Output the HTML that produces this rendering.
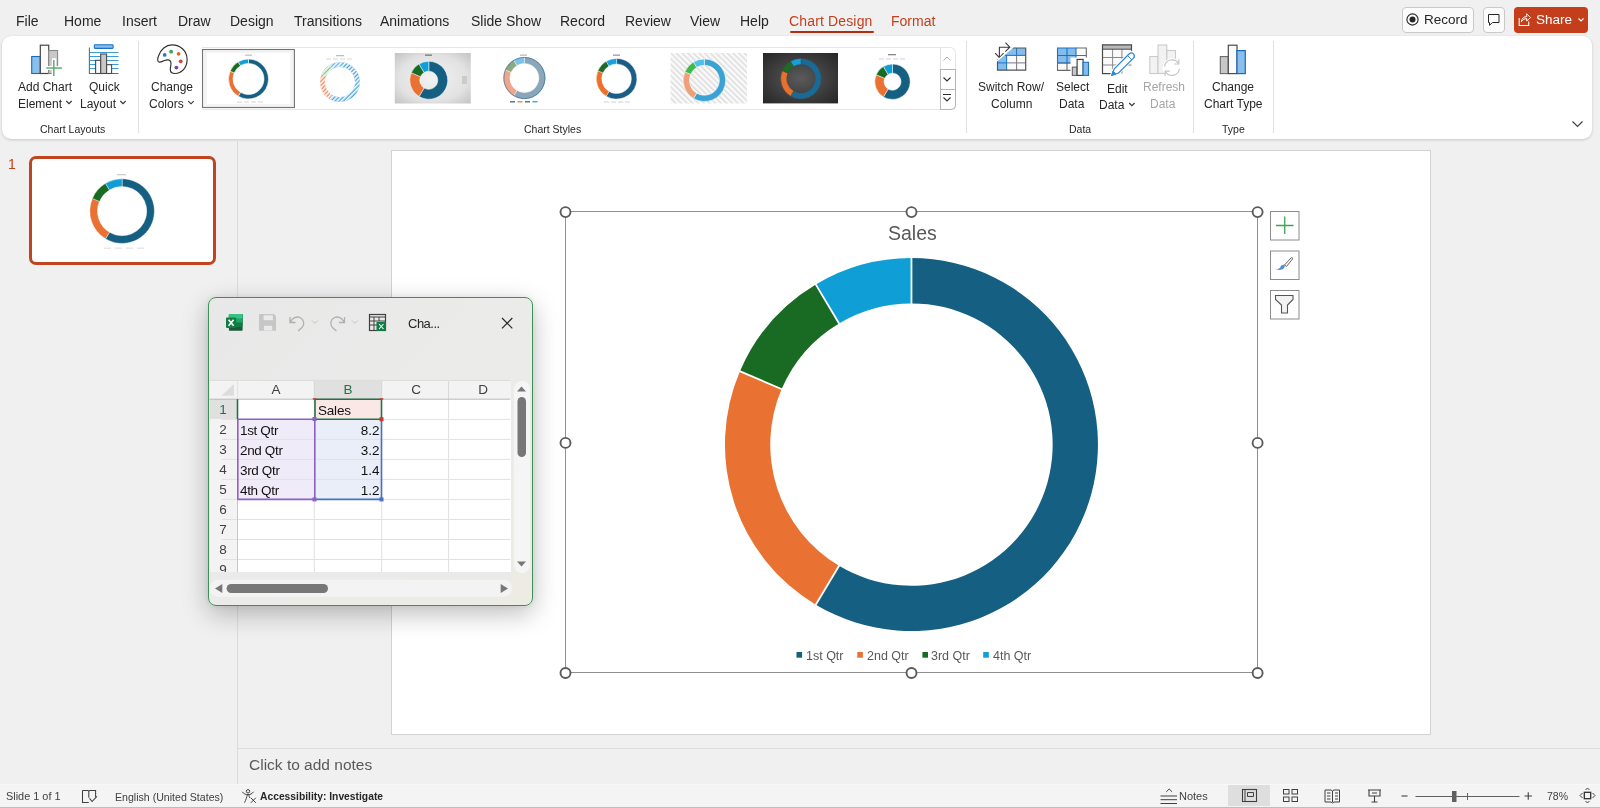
<!DOCTYPE html><html><head><meta charset="utf-8"><style>
*{margin:0;padding:0;box-sizing:border-box}
html,body{width:1600px;height:808px;overflow:hidden;background:#f0f0f0;font-family:"Liberation Sans",sans-serif;-webkit-font-smoothing:antialiased}
.t{position:absolute;white-space:nowrap;line-height:1;will-change:transform}
.a{position:absolute}
svg{position:absolute;overflow:visible}
</style></head><body><div class="t" style="left:16.3px;top:14.35px;font-size:14px;color:#262626;font-weight:normal;">File</div><div class="t" style="left:63.9px;top:14.35px;font-size:14px;color:#262626;font-weight:normal;">Home</div><div class="t" style="left:122px;top:14.35px;font-size:14px;color:#262626;font-weight:normal;">Insert</div><div class="t" style="left:177.8px;top:14.35px;font-size:14px;color:#262626;font-weight:normal;">Draw</div><div class="t" style="left:230px;top:14.35px;font-size:14px;color:#262626;font-weight:normal;">Design</div><div class="t" style="left:293.5px;top:14.35px;font-size:14px;color:#262626;font-weight:normal;">Transitions</div><div class="t" style="left:380px;top:14.35px;font-size:14px;color:#262626;font-weight:normal;">Animations</div><div class="t" style="left:470.9px;top:14.35px;font-size:14px;color:#262626;font-weight:normal;">Slide Show</div><div class="t" style="left:559.6px;top:14.35px;font-size:14px;color:#262626;font-weight:normal;">Record</div><div class="t" style="left:624.6px;top:14.35px;font-size:14px;color:#262626;font-weight:normal;">Review</div><div class="t" style="left:690px;top:14.35px;font-size:14px;color:#262626;font-weight:normal;">View</div><div class="t" style="left:739.5px;top:14.35px;font-size:14px;color:#262626;font-weight:normal;">Help</div><div class="t" style="left:788.9px;top:14.35px;font-size:14px;color:#c43e1c;font-weight:normal;letter-spacing:0.15px">Chart Design</div><div class="t" style="left:891.2px;top:14.35px;font-size:14px;color:#c43e1c;font-weight:normal;">Format</div><div class="a" style="left:790px;top:30.8px;width:83.5px;height:2.3px;background:#b42c0e;border-radius:1.2px"></div><div class="a" style="left:1401.5px;top:7px;width:72.3px;height:25.5px;border:1px solid #c9c9c9;border-radius:4px;background:#fbfbfb"></div><svg style="left:0;top:0" width="1600" height="40"><circle cx="1412.5" cy="19.5" r="5.6" fill="none" stroke="#262626" stroke-width="1.1"/><circle cx="1412.5" cy="19.5" r="3" fill="#262626"/></svg><div class="t" style="left:1424px;top:13.47px;font-size:13.5px;color:#262626;font-weight:normal;">Record</div><div class="a" style="left:1483px;top:7px;width:21.5px;height:25.5px;border:1px solid #c9c9c9;border-radius:4px;background:#fbfbfb"></div><svg style="left:0;top:0" width="1600" height="40"><path d="M1488.5,14.5 h10.5 v8 h-6.5 l-3,2.8 v-2.8 h-1 z" fill="none" stroke="#262626" stroke-width="1"/></svg><div class="a" style="left:1513.75px;top:7px;width:74.5px;height:25.5px;border-radius:4px;background:#c43e1c"></div><svg style="left:0;top:0" width="1600" height="40"><path d="M1519.2,18.1 V25.5 H1528.7 V21.4" fill="none" stroke="#fff" stroke-width="1.1"/><path d="M1521.4,21.8 C1521.8,18.2 1524,16.6 1526.7,16.6 V13.8 L1530.6,17.6 L1526.7,21 V18.6 C1524.5,18.6 1522.6,19.6 1521.4,21.8 Z" fill="none" stroke="#fff" stroke-width="1"/><path d="M1578.5,18.5 l2.5,2.5 l2.5,-2.5" fill="none" stroke="#fff" stroke-width="1.1"/></svg><div class="t" style="left:1535.6px;top:13.47px;font-size:13.5px;color:#ffffff;font-weight:normal;">Share</div><div class="a" style="left:2.3px;top:36px;width:1589.7px;height:103px;background:#fff;border-radius:9px;box-shadow:0 1px 3px rgba(0,0,0,0.16),0 0 1px rgba(0,0,0,0.1)"></div><div class="a" style="left:138.0px;top:41px;width:1px;height:92px;background:#e0e0e0"></div><div class="a" style="left:966.0px;top:41px;width:1px;height:92px;background:#e0e0e0"></div><div class="a" style="left:1193.0px;top:41px;width:1px;height:92px;background:#e0e0e0"></div><div class="a" style="left:1272.5px;top:41px;width:1px;height:92px;background:#e0e0e0"></div><div class="t" style="left:39.75px;top:124.01px;font-size:10.5px;color:#262626;font-weight:normal;">Chart Layouts</div><div class="t" style="left:523.5px;top:124.01px;font-size:10.5px;color:#262626;font-weight:normal;">Chart Styles</div><div class="t" style="left:1068.7px;top:124.01px;font-size:10.5px;color:#262626;font-weight:normal;">Data</div><div class="t" style="left:1222px;top:124.01px;font-size:10.5px;color:#262626;font-weight:normal;">Type</div><svg style="left:0;top:0" width="1600" height="140"><path d="M1572.5,121.5 l5,5 l5,-5" fill="none" stroke="#404040" stroke-width="1.2"/></svg><div class="t" style="left:17.5px;top:80.84px;font-size:12px;color:#262626;font-weight:normal;">Add Chart</div><div class="t" style="left:17.5px;top:97.84px;font-size:12px;color:#262626;font-weight:normal;">Element</div><div class="t" style="left:88.75px;top:80.84px;font-size:12px;color:#262626;font-weight:normal;">Quick</div><div class="t" style="left:80px;top:97.84px;font-size:12px;color:#262626;font-weight:normal;">Layout</div><div class="t" style="left:151px;top:80.84px;font-size:12px;color:#262626;font-weight:normal;">Change</div><div class="t" style="left:148.75px;top:97.84px;font-size:12px;color:#262626;font-weight:normal;">Colors</div><div class="t" style="left:977.7px;top:80.54px;font-size:12px;color:#262626;font-weight:normal;">Switch Row/</div><div class="t" style="left:990.7px;top:97.54px;font-size:12px;color:#262626;font-weight:normal;">Column</div><div class="t" style="left:1055.5px;top:80.54px;font-size:12px;color:#262626;font-weight:normal;">Select</div><div class="t" style="left:1059px;top:97.54px;font-size:12px;color:#262626;font-weight:normal;">Data</div><div class="t" style="left:1106.6px;top:82.54px;font-size:12px;color:#262626;font-weight:normal;">Edit</div><div class="t" style="left:1098.7px;top:99.04px;font-size:12px;color:#262626;font-weight:normal;">Data</div><div class="t" style="left:1142.6px;top:80.54px;font-size:12px;color:#a6a6a6;font-weight:normal;">Refresh</div><div class="t" style="left:1150px;top:97.54px;font-size:12px;color:#a6a6a6;font-weight:normal;">Data</div><div class="t" style="left:1212px;top:80.84px;font-size:12px;color:#262626;font-weight:normal;">Change</div><div class="t" style="left:1203.75px;top:97.84px;font-size:12px;color:#262626;font-weight:normal;">Chart Type</div><svg style="left:0;top:0" width="1600" height="140"><path d="M66.3,101 l2.7,2.6 l2.7,-2.6" fill="none" stroke="#333" stroke-width="1.15"/><path d="M120.3,101 l2.7,2.6 l2.7,-2.6" fill="none" stroke="#333" stroke-width="1.15"/><path d="M188.3,101.2 l2.7,2.6 l2.7,-2.6" fill="none" stroke="#333" stroke-width="1.15"/><path d="M1129.2,103 l2.7,2.6 l2.7,-2.6" fill="none" stroke="#333" stroke-width="1.15"/>
<!-- Add chart element -->
<rect x="31.7" y="56.5" width="8.6" height="17" fill="#89bfec" stroke="#1769bf" stroke-width="1.1"/>
<rect x="40.3" y="45.2" width="8.4" height="28.3" fill="#fafafa" stroke="#454545" stroke-width="1.2"/>
<rect x="48.7" y="50.5" width="8.9" height="23" fill="#c8c8c8" stroke="#8a8a8a" stroke-width="1.1"/>
<path d="M46.3,68 H62 M53.8,60 V76" stroke="#fff" stroke-width="4"/>
<rect x="52" y="58.3" width="4.3" height="8" fill="#fff"/><rect x="52" y="66" width="8" height="9" fill="#fff"/>
<path d="M46.3,68 H62 M53.8,60 V76" stroke="#5cb176" stroke-width="1.5"/>
<!-- Quick layout -->
<rect x="94.3" y="44.8" width="18.8" height="3.6" rx="0.8" fill="#84bdeb" stroke="#1a73c8" stroke-width="1.1"/>
<path d="M89.8,52.5 h28.7 M89.8,56.5 h28.7 M89.8,60.5 h28.7 M89.8,64.5 h28.7 M89.8,68.5 h28.7" stroke="#3d9ad8" stroke-width="1"/>
<path d="M89.4,47.4 V73.5 H118.5" fill="none" stroke="#6a6a6a" stroke-width="1.1"/>
<rect x="95.6" y="60.3" width="5.1" height="13.2" fill="#fafafa" stroke="#4a4a4a" stroke-width="1.1"/>
<rect x="100.7" y="54" width="5.9" height="19.5" fill="#c8c8c8" stroke="#4a4a4a" stroke-width="1.1"/>
<rect x="106.6" y="64.7" width="5" height="8.8" fill="#fafafa" stroke="#4a4a4a" stroke-width="1.1"/>
<!-- palette -->
<path d="M172,44.8 C180.5,44.8 187.1,51 187.1,59.5 C187.1,68 181.5,73.5 175,73.5 C172,73.5 170.3,72 170.3,69.5 C170.3,66.5 171.5,64.5 170.8,62 C170,59.5 167,59.5 164.5,60.5 C162,61.5 160.5,62.5 158.8,62 C157.3,61.5 157.5,58.5 158.5,56 C160.5,49.5 166,44.8 172,44.8 Z" fill="#fff" stroke="#303030" stroke-width="1.15"/>
<circle cx="164.7" cy="54.9" r="1.9" fill="#2b79c9"/>
<circle cx="171.1" cy="51.7" r="1.9" fill="#3aa35a"/>
<circle cx="178.6" cy="53.8" r="1.9" fill="#e06c1b"/>
<circle cx="180.7" cy="61.3" r="1.9" fill="#e03a3a"/>
<circle cx="176.4" cy="67.6" r="1.9" fill="#8a3ab9"/>
<!-- switch row/col -->
<path d="M997.5,59.5 L1011.5,48 H1025.7 V70.2 H997.5 Z" fill="#fafafa"/>
<path d="M997.5,59.5 L1011.5,48 H1025.7 V55.4 H1006.6 V70.2 H997.5 Z" fill="#84bdeb"/>
<path d="M1006.6,62.9 H1025.7 M1016.6,55.4 V70.2" stroke="#7a7a7a" stroke-width="1"/>
<path d="M1005,55.4 H1025.7 M1006.6,55.4 V70.2 M997.5,62.9 H1006.6 M1016.6,48 V55.4" stroke="#1a73c8" stroke-width="1"/>
<path d="M997.5,59 V70.2 H1025.7 V48 H1011.5" fill="none" stroke="#555" stroke-width="1.2"/>
<path d="M999.4,57.6 V47.2 H1009.8 M1005.5,42.7 L1009.8,47.2 L1005.3,51.6 M995.2,53.1 L999.4,57.6 L1003.6,53.1" fill="none" stroke="#3a3a3a" stroke-width="1.1"/>
<path d="M995.5,62 L1013,47" stroke="#fff" stroke-width="1.6"/>
<!-- select data -->
<rect x="1057.5" y="48" width="28.8" height="22.4" fill="#fafafa"/>
<rect x="1057.5" y="48" width="18.5" height="15" fill="#84bdeb"/>
<path d="M1076,48 H1086.3 V70.4 H1057.5 V63 M1076,55.5 H1086.3 M1057.5,63 H1076 M1067,63 V70.4" fill="none" stroke="#6a6a6a" stroke-width="1.1"/>
<path d="M1057.5,63 V48 H1076 V63 H1057.5 M1057.5,55.5 H1076 M1067,48 V63" fill="none" stroke="#1a73c8" stroke-width="1.1"/>
<rect x="1070.5" y="57.5" width="19.5" height="19" fill="#fff"/>
<rect x="1072.3" y="67.1" width="4.8" height="8.3" fill="#c8c8c8" stroke="#5a5a5a" stroke-width="1"/>
<rect x="1077.1" y="59.4" width="6" height="16" fill="#fafafa" stroke="#3a3a3a" stroke-width="1.1"/>
<rect x="1083.1" y="62.3" width="5.4" height="13.1" fill="#84bdeb" stroke="#1a73c8" stroke-width="1.1"/>
<!-- edit data -->
<rect x="1102.5" y="44.8" width="29" height="28.9" fill="#fafafa"/>
<rect x="1102.5" y="44.8" width="29" height="4.4" fill="#b8b8b8"/>
<path d="M1102.5,57.5 H1131.5 M1102.5,65 H1131.5 M1112.6,49.2 V73.7 M1121.9,49.2 V73.7" stroke="#8a8a8a" stroke-width="1"/>
<path d="M1131.5,52 V44.8 H1102.5 V73.7 H1113" fill="none" stroke="#4a4a4a" stroke-width="1.2"/>
<path d="M1102.5,49.2 H1131.5" stroke="#4a4a4a" stroke-width="1"/>
<path d="M1111,76 L1114,68.5 L1129,53.5 C1130.5,52 1132.5,52 1133.8,53.3 C1135.1,54.6 1135.1,56.6 1133.6,58.1 L1118.6,73 Z" fill="#fff" stroke="#fff" stroke-width="2.5"/>
<path d="M1111.8,75.3 L1114.3,68.8 L1129,54 C1130.3,52.7 1132.2,52.7 1133.4,53.9 C1134.6,55.1 1134.6,57 1133.3,58.3 L1118.5,73 Z" fill="#fff" stroke="#2b88d8" stroke-width="1.2"/>
<path d="M1111.8,75.3 L1113,71 L1116,74 Z" fill="#2b88d8" stroke="#2b88d8" stroke-width="1"/>
<path d="M1127.5,55.5 L1132,60" stroke="#2b88d8" stroke-width="1"/>
<!-- refresh data (disabled) -->
<rect x="1149.8" y="56.5" width="8.2" height="17" fill="#f2f2f2" stroke="#cacaca" stroke-width="1.1"/>
<rect x="1158" y="45" width="8.8" height="28.5" fill="#f2f2f2" stroke="#cacaca" stroke-width="1.1"/>
<rect x="1166.8" y="50.5" width="8.7" height="23" fill="#f2f2f2" stroke="#cacaca" stroke-width="1.1"/>
<circle cx="1172" cy="67.6" r="9.5" fill="#fff"/>
<path d="M1164.6,66.5 A7.5,7.5 0 0 1 1178.5,63.5 M1179.4,68.7 A7.5,7.5 0 0 1 1165.5,71.7" fill="none" stroke="#c4c4c4" stroke-width="1.2"/>
<path d="M1178.8,59.5 V64 H1174.3 M1165.2,75.7 V71.2 H1169.7" fill="none" stroke="#c4c4c4" stroke-width="1.2"/>
<!-- change chart type -->
<rect x="1220.3" y="56.6" width="8" height="17" fill="#c8c8c8" stroke="#6a6a6a" stroke-width="1.1"/>
<rect x="1228.3" y="45.2" width="8.7" height="28.4" fill="#fafafa" stroke="#4a4a4a" stroke-width="1.2"/>
<rect x="1237" y="50.6" width="8.3" height="23" fill="#89bfec" stroke="#1769bf" stroke-width="1.2"/>
</svg><div class="a" style="left:202px;top:47px;width:754px;height:62.5px;border:1px solid #e6e6e6;border-left:none;border-radius:0 6px 6px 0;background:#fff"></div><div class="a" style="left:939.5px;top:47.5px;width:1px;height:62px;background:#e1e1e1"></div><div class="a" style="left:939.5px;top:69px;width:16.5px;height:1px;background:#b5b5b5"></div><div class="a" style="left:939.5px;top:89px;width:16.5px;height:1px;background:#b5b5b5"></div><div class="a" style="left:940px;top:69px;width:16px;height:40.5px;border:1px solid #b5b5b5;border-radius:0 0 5px 0;border-top:none"></div><svg style="left:0;top:0" width="1600" height="140"><path d="M943.5,60.5 l3.5,-3.5 l3.5,3.5" fill="none" stroke="#b0b0b0" stroke-width="1"/><path d="M943.5,77.5 l3.5,3.5 l3.5,-3.5" fill="none" stroke="#303030" stroke-width="1.1"/><path d="M943,94.5 h8 M943.5,97.5 l3.5,3.5 l3.5,-3.5" fill="none" stroke="#303030" stroke-width="1.1"/><rect x="202.5" y="49.5" width="91.9" height="58" fill="#f4f4f4" stroke="#747474" stroke-width="1.1"/><rect x="207" y="53" width="83" height="51" fill="#fff"/><path d="M248.50,59.00 A20,20 0 1 1 238.24,96.17 L240.55,92.31 A15.5,15.5 0 1 0 248.50,63.50 Z" fill="#156082" stroke="#fff" stroke-width="0.6" /><path d="M238.24,96.17 A20,20 0 0 1 230.11,71.14 L234.25,72.91 A15.5,15.5 0 0 0 240.55,92.31 Z" fill="#e97132" stroke="#fff" stroke-width="0.6" /><path d="M230.11,71.14 A20,20 0 0 1 238.24,61.83 L240.55,65.69 A15.5,15.5 0 0 0 234.25,72.91 Z" fill="#196b24" stroke="#fff" stroke-width="0.6" /><path d="M238.24,61.83 A20,20 0 0 1 248.50,59.00 L248.50,63.50 A15.5,15.5 0 0 0 240.55,65.69 Z" fill="#0f9ed5" stroke="#fff" stroke-width="0.6" /><rect x="245" y="54.5" width="7" height="1.3" fill="#c4c4c4"/><rect x="237" y="101.5" width="5" height="1" fill="#d4d4d4"/><rect x="244" y="101.5" width="5" height="1" fill="#d4d4d4"/><rect x="251" y="101.5" width="5" height="1" fill="#d4d4d4"/><rect x="258" y="101.5" width="5" height="1" fill="#d4d4d4"/><defs><pattern id="h1" width="3" height="3" patternUnits="userSpaceOnUse" patternTransform="rotate(45)"><rect width="1.6" height="3" fill="#fff"/></pattern><pattern id="h2" width="4" height="4" patternUnits="userSpaceOnUse" patternTransform="rotate(-45)"><rect width="4" height="4" fill="#fafafa"/><rect width="1.5" height="4" fill="#dcdcdc"/></pattern><radialGradient id="g3" cx="0.5" cy="0.5" r="0.75"><stop offset="0" stop-color="#f2f2f2"/><stop offset="0.6" stop-color="#e2e2e2"/><stop offset="1" stop-color="#bdbdbd"/></radialGradient><radialGradient id="g7" cx="0.5" cy="0.5" r="0.7"><stop offset="0" stop-color="#5a5a5a"/><stop offset="1" stop-color="#262626"/></radialGradient></defs><path d="M340.00,62.00 A20,20 0 1 1 329.74,99.17 L332.31,94.88 A15,15 0 1 0 340.00,67.00 Z" fill="#4ea4d9" stroke="#fff" stroke-width="0.3" /><path d="M329.74,99.17 A20,20 0 0 1 321.61,74.14 L326.21,76.10 A15,15 0 0 0 332.31,94.88 Z" fill="#eb8a5a" stroke="#fff" stroke-width="0.3" /><path d="M321.61,74.14 A20,20 0 0 1 329.74,64.83 L332.31,69.12 A15,15 0 0 0 326.21,76.10 Z" fill="#7fc47f" stroke="#fff" stroke-width="0.3" /><path d="M329.74,64.83 A20,20 0 0 1 340.00,62.00 L340.00,67.00 A15,15 0 0 0 332.31,69.12 Z" fill="#5fb6e6" stroke="#fff" stroke-width="0.3" /><g><path d="M340.00,62.00 A20,20 0 1 1 329.74,99.17 L332.31,94.88 A15,15 0 1 0 340.00,67.00 Z" fill="url(#h1)" stroke="none" stroke-width="0" /><path d="M329.74,99.17 A20,20 0 0 1 321.61,74.14 L326.21,76.10 A15,15 0 0 0 332.31,94.88 Z" fill="url(#h1)" stroke="none" stroke-width="0" /><path d="M321.61,74.14 A20,20 0 0 1 329.74,64.83 L332.31,69.12 A15,15 0 0 0 326.21,76.10 Z" fill="url(#h1)" stroke="none" stroke-width="0" /><path d="M329.74,64.83 A20,20 0 0 1 340.00,62.00 L340.00,67.00 A15,15 0 0 0 332.31,69.12 Z" fill="url(#h1)" stroke="none" stroke-width="0" /></g><rect x="336" y="55" width="8" height="1.3" fill="#bdbdbd"/><rect x="326" y="58.5" width="5" height="1" fill="#d6d6d6"/><rect x="333" y="58.5" width="5" height="1" fill="#d6d6d6"/><rect x="340" y="58.5" width="5" height="1" fill="#d6d6d6"/><rect x="347" y="58.5" width="5" height="1" fill="#d6d6d6"/><rect x="394.75" y="53" width="76" height="50.5" fill="url(#g3)"/><path d="M428.75,61.25 A19,19 0 1 1 419.00,96.56 L424.13,87.98 A9,9 0 1 0 428.75,71.25 Z" fill="#156082" stroke="#fff" stroke-width="0.5" /><path d="M419.00,96.56 A19,19 0 0 1 411.28,72.78 L420.47,76.71 A9,9 0 0 0 424.13,87.98 Z" fill="#e97132" stroke="#fff" stroke-width="0.5" /><path d="M411.28,72.78 A19,19 0 0 1 419.00,63.94 L424.13,72.52 A9,9 0 0 0 420.47,76.71 Z" fill="#196b24" stroke="#fff" stroke-width="0.5" /><path d="M419.00,63.94 A19,19 0 0 1 428.75,61.25 L428.75,71.25 A9,9 0 0 0 424.13,72.52 Z" fill="#0f9ed5" stroke="#fff" stroke-width="0.5" /><rect x="462" y="76" width="5" height="8" fill="#bbb" opacity="0.6"/><rect x="425" y="54.5" width="7" height="1.3" fill="#777"/><path d="M524.40,57.00 A21,21 0 1 1 513.63,96.03 L516.96,90.45 A14.5,14.5 0 1 0 524.40,63.50 Z" fill="#8aa6bb" stroke="#fff" stroke-width="0.4" /><path d="M513.63,96.03 A21,21 0 0 1 505.09,69.75 L511.07,72.30 A14.5,14.5 0 0 0 516.96,90.45 Z" fill="#f1a58a" stroke="#fff" stroke-width="0.4" /><path d="M505.09,69.75 A21,21 0 0 1 513.63,59.97 L516.96,65.55 A14.5,14.5 0 0 0 511.07,72.30 Z" fill="#89aa84" stroke="#fff" stroke-width="0.4" /><path d="M513.63,59.97 A21,21 0 0 1 524.40,57.00 L524.40,63.50 A14.5,14.5 0 0 0 516.96,65.55 Z" fill="#7cc3e8" stroke="#fff" stroke-width="0.4" /><circle cx="524.4" cy="78" r="20.6" fill="none" stroke="#1f5f82" stroke-width="0.8" opacity="0.8"/><rect x="520" y="54.5" width="7" height="1.3" fill="#bbb"/><rect x="510.0" y="101" width="5" height="1.5" fill="#156082" opacity="0.8"/><rect x="517.5" y="101" width="5" height="1.5" fill="#e97132" opacity="0.8"/><rect x="525.0" y="101" width="5" height="1.5" fill="#196b24" opacity="0.8"/><rect x="532.5" y="101" width="5" height="1.5" fill="#0f9ed5" opacity="0.8"/><path d="M616.60,58.45 A20.3,20.3 0 1 1 606.19,96.18 L609.01,91.46 A14.8,14.8 0 1 0 616.60,63.95 Z" fill="#1a5e86" stroke="#fff" stroke-width="0.4" /><path d="M606.19,96.18 A20.3,20.3 0 0 1 597.93,70.77 L602.99,72.93 A14.8,14.8 0 0 0 609.01,91.46 Z" fill="#ec6f2a" stroke="#fff" stroke-width="0.4" /><path d="M597.93,70.77 A20.3,20.3 0 0 1 606.19,61.32 L609.01,66.04 A14.8,14.8 0 0 0 602.99,72.93 Z" fill="#1d6b2a" stroke="#fff" stroke-width="0.4" /><path d="M606.19,61.32 A20.3,20.3 0 0 1 616.60,58.45 L616.60,63.95 A14.8,14.8 0 0 0 609.01,66.04 Z" fill="#15a2dd" stroke="#fff" stroke-width="0.4" /><rect x="613" y="54.5" width="7" height="1.3" fill="#999"/><rect x="604" y="101.5" width="5" height="1" fill="#c8d2e6"/><rect x="611" y="101.5" width="5" height="1" fill="#c8d2e6"/><rect x="618" y="101.5" width="5" height="1" fill="#c8d2e6"/><rect x="625" y="101.5" width="5" height="1" fill="#c8d2e6"/><rect x="670.6" y="53" width="76.4" height="50.5" fill="url(#h2)"/><path d="M704.40,59.00 A21.25,21.25 0 1 1 693.50,98.49 L696.71,93.13 A15,15 0 1 0 704.40,65.25 Z" fill="#3aa3d4" stroke="#fff" stroke-width="0.5" /><path d="M693.50,98.49 A21.25,21.25 0 0 1 684.86,71.90 L690.61,74.35 A15,15 0 0 0 696.71,93.13 Z" fill="#efa07a" stroke="#fff" stroke-width="0.5" /><path d="M684.86,71.90 A21.25,21.25 0 0 1 693.50,62.01 L696.71,67.37 A15,15 0 0 0 690.61,74.35 Z" fill="#41b84d" stroke="#fff" stroke-width="0.5" /><path d="M693.50,62.01 A21.25,21.25 0 0 1 704.40,59.00 L704.40,65.25 A15,15 0 0 0 696.71,67.37 Z" fill="#4fc0ea" stroke="#fff" stroke-width="0.5" /><rect x="763" y="53" width="75" height="50.4" fill="url(#g7)"/><path d="M801.00,58.40 A20.3,20.3 0 1 1 790.59,96.13 L793.67,90.98 A14.3,14.3 0 1 0 801.00,64.40 Z" fill="#1a6a96" stroke="#444" stroke-width="0.4" /><path d="M790.59,96.13 A20.3,20.3 0 0 1 782.33,70.72 L787.85,73.08 A14.3,14.3 0 0 0 793.67,90.98 Z" fill="#e6712f" stroke="#444" stroke-width="0.4" /><path d="M782.33,70.72 A20.3,20.3 0 0 1 790.59,61.27 L793.67,66.42 A14.3,14.3 0 0 0 787.85,73.08 Z" fill="#1c6b27" stroke="#444" stroke-width="0.4" /><path d="M790.59,61.27 A20.3,20.3 0 0 1 801.00,58.40 L801.00,64.40 A14.3,14.3 0 0 0 793.67,66.42 Z" fill="#14a0dc" stroke="#444" stroke-width="0.4" /><path d="M892.50,64.00 A17.7,17.7 0 1 1 883.42,96.89 L888.14,89.00 A8.5,8.5 0 1 0 892.50,73.20 Z" fill="#156082" stroke="#fff" stroke-width="0.5" /><path d="M883.42,96.89 A17.7,17.7 0 0 1 876.22,74.74 L884.68,78.36 A8.5,8.5 0 0 0 888.14,89.00 Z" fill="#e97132" stroke="#fff" stroke-width="0.5" /><path d="M876.22,74.74 A17.7,17.7 0 0 1 883.42,66.51 L888.14,74.40 A8.5,8.5 0 0 0 884.68,78.36 Z" fill="#196b24" stroke="#fff" stroke-width="0.5" /><path d="M883.42,66.51 A17.7,17.7 0 0 1 892.50,64.00 L892.50,73.20 A8.5,8.5 0 0 0 888.14,74.40 Z" fill="#0f9ed5" stroke="#fff" stroke-width="0.5" /><rect x="888" y="54" width="8" height="1.3" fill="#888"/><rect x="879" y="58.5" width="5" height="1" fill="#c8d2e6"/><rect x="886" y="58.5" width="5" height="1" fill="#c8d2e6"/><rect x="893" y="58.5" width="5" height="1" fill="#c8d2e6"/><rect x="900" y="58.5" width="5" height="1" fill="#c8d2e6"/></svg><div class="a" style="left:237px;top:139px;width:1px;height:645px;background:#dcdcdc"></div><div class="t" style="left:7.8px;top:156.85px;font-size:14px;color:#c43e1c;font-weight:normal;">1</div><div class="a" style="left:28.5px;top:156.2px;width:187.3px;height:108.6px;border:3px solid #c0441f;border-radius:7px;background:#fff"></div><svg style="left:0;top:0" width="240" height="300"><path d="M122.10,178.80 A32.3,32.3 0 1 1 105.53,238.83 L109.48,232.22 A24.6,24.6 0 1 0 122.10,186.50 Z" fill="#156082" stroke="#fff" stroke-width="0.4" /><path d="M105.53,238.83 A32.3,32.3 0 0 1 92.40,198.41 L99.48,201.43 A24.6,24.6 0 0 0 109.48,232.22 Z" fill="#e97132" stroke="#fff" stroke-width="0.4" /><path d="M92.40,198.41 A32.3,32.3 0 0 1 105.53,183.37 L109.48,189.98 A24.6,24.6 0 0 0 99.48,201.43 Z" fill="#196b24" stroke="#fff" stroke-width="0.4" /><path d="M105.53,183.37 A32.3,32.3 0 0 1 122.10,178.80 L122.10,186.50 A24.6,24.6 0 0 0 109.48,189.98 Z" fill="#0f9ed5" stroke="#fff" stroke-width="0.4" /><rect x="117" y="174" width="9" height="1.3" fill="#b8b8b8" opacity="0.7"/><rect x="104" y="247.6" width="7" height="1.1" fill="#c8c8c8" opacity="0.6"/><rect x="115" y="247.6" width="7" height="1.1" fill="#c8c8c8" opacity="0.6"/><rect x="126" y="247.6" width="7" height="1.1" fill="#c8c8c8" opacity="0.6"/><rect x="137" y="247.6" width="7" height="1.1" fill="#c8c8c8" opacity="0.6"/></svg><div class="a" style="left:391px;top:149.5px;width:1040px;height:585.3px;background:#fff;border:1px solid #d2d2d2"></div><svg style="left:0;top:0" width="1600" height="808"><rect x="565.5" y="211.5" width="692" height="461" fill="none" stroke="#909090" stroke-width="1"/><path d="M911.45,258.10 A186.5,186.5 0 1 1 815.79,604.70 L839.03,565.81 A141.2,141.2 0 1 0 911.45,303.40 Z" fill="#156082" /><path d="M815.79,604.70 A186.5,186.5 0 0 1 739.96,371.30 L781.61,389.10 A141.2,141.2 0 0 0 839.03,565.81 Z" fill="#e97132" /><path d="M739.96,371.30 A186.5,186.5 0 0 1 815.79,284.50 L839.03,323.39 A141.2,141.2 0 0 0 781.61,389.10 Z" fill="#196b24" /><path d="M815.79,284.50 A186.5,186.5 0 0 1 911.45,258.10 L911.45,303.40 A141.2,141.2 0 0 0 839.03,323.39 Z" fill="#0f9ed5" /><path d="M911.45,304.40 L911.45,257.10" stroke="#fff" stroke-width="1.8"/><path d="M839.54,564.95 L815.28,605.56" stroke="#fff" stroke-width="1.8"/><path d="M782.53,389.50 L739.04,370.91" stroke="#fff" stroke-width="1.8"/><path d="M839.54,324.25 L815.28,283.64" stroke="#fff" stroke-width="1.8"/><circle cx="565.5" cy="212.1" r="5" fill="#fff" stroke="#5a5a5a" stroke-width="1.9"/><circle cx="565.5" cy="442.9" r="5" fill="#fff" stroke="#5a5a5a" stroke-width="1.9"/><circle cx="565.5" cy="673" r="5" fill="#fff" stroke="#5a5a5a" stroke-width="1.9"/><circle cx="911.5" cy="212.1" r="5" fill="#fff" stroke="#5a5a5a" stroke-width="1.9"/><circle cx="911.5" cy="673" r="5" fill="#fff" stroke="#5a5a5a" stroke-width="1.9"/><circle cx="1257.6" cy="212.1" r="5" fill="#fff" stroke="#5a5a5a" stroke-width="1.9"/><circle cx="1257.6" cy="442.9" r="5" fill="#fff" stroke="#5a5a5a" stroke-width="1.9"/><circle cx="1257.6" cy="673" r="5" fill="#fff" stroke="#5a5a5a" stroke-width="1.9"/><rect x="796.5" y="652" width="5.6" height="5.7" fill="#156082"/><rect x="857.3" y="652" width="5.6" height="5.7" fill="#e97132"/><rect x="922.4" y="652" width="5.6" height="5.7" fill="#196b24"/><rect x="983.2" y="652" width="5.6" height="5.7" fill="#0f9ed5"/><rect x="1270.5" y="211.5" width="28.5" height="28.5" fill="#fff" stroke="#8c8c8c" stroke-width="1"/><rect x="1270.5" y="251" width="28.5" height="28.5" fill="#fff" stroke="#8c8c8c" stroke-width="1"/><rect x="1270.5" y="290.5" width="28.5" height="28.5" fill="#fff" stroke="#8c8c8c" stroke-width="1"/><path d="M1276,225.5 h17.5 M1284.75,216.5 v17.5" stroke="#3aa35a" stroke-width="1.3"/><path d="M1291,258 c1,-1 2,0 1.5,1 l-6,7.5 l-2,-1.5 z" fill="#fff" stroke="#555" stroke-width="0.9"/><path d="M1284.5,265 c-1.5,-0.5 -3.5,0 -4,2 c-0.5,1.5 -2,2 -5,2 c2,1 6,1.5 8,-0.5 c1,-1 1.5,-2 1,-3.5z" fill="#4a90d9"/><path d="M1275.5,295.5 h17.5 v4 l-5.5,5.5 v8 h-6 v-8 l-6,-5.5 z" fill="#f2f2f2" stroke="#555" stroke-width="1.1"/></svg><div class="t" style="left:887.6px;top:223.69px;font-size:19.5px;color:#595959;font-weight:normal;">Sales</div><div class="t" style="left:806px;top:649.62px;font-size:12.5px;color:#595959;font-weight:normal;">1st Qtr</div><div class="t" style="left:866.8px;top:649.62px;font-size:12.5px;color:#595959;font-weight:normal;">2nd Qtr</div><div class="t" style="left:931px;top:649.62px;font-size:12.5px;color:#595959;font-weight:normal;">3rd Qtr</div><div class="t" style="left:992.7px;top:649.62px;font-size:12.5px;color:#595959;font-weight:normal;">4th Qtr</div><div class="a" style="left:237px;top:747.5px;width:1363px;height:1px;background:#dcdcdc"></div><div class="t" style="left:249.4px;top:757.38px;font-size:15.5px;color:#595959;font-weight:normal;">Click to add notes</div><div class="a" style="left:0;top:784px;width:1600px;height:24px;background:#f4f4f4;border-top:1px solid #f8f8f8"></div><div class="a" style="left:0;top:806.5px;width:1600px;height:1.5px;background:#bdbdbd"></div><div class="t" style="left:6.4px;top:791.07px;font-size:10.9px;color:#404040;font-weight:normal;">Slide 1 of 1</div><div class="t" style="left:115px;top:791.83px;font-size:10.6px;color:#404040;font-weight:normal;">English (United States)</div><div class="t" style="left:259.5px;top:791.58px;font-size:10.3px;color:#262626;font-weight:bold;">Accessibility: Investigate</div><svg style="left:0;top:0" width="1600" height="808"><path d="M82.5,790.5 h5.5 l0.8,0.8 l0.8,-0.8 h6 v6.5 M82.5,790.5 v12 h6.3 M88.8,791.3 v6.5" fill="none" stroke="#404040" stroke-width="1.05"/><path d="M89.5,798.3 l2.6,3.2 l4.8,-5.2" fill="none" stroke="#404040" stroke-width="1.05"/><circle cx="248" cy="791.3" r="1.7" fill="none" stroke="#404040" stroke-width="1"/><path d="M242.3,791.8 c1.5,2.2 3.5,2.8 5.7,2.8 c2.2,0 4,-0.6 5.5,-2.8 M247.3,794.6 c-0.5,2.5 -1.2,5 -2.8,8 M248.8,794.6 c0.2,1.5 0.5,2.5 1.2,3.5" fill="none" stroke="#404040" stroke-width="1"/><path d="M250.8,797.8 l5,5 M255.8,797.8 l-5,5" stroke="#404040" stroke-width="1"/><path d="M1160.5,796 h16.5 M1160.5,799.7 h16.5 M1160.5,803.5 h16.5 M1166.3,791.8 l2.9,-2.8 l2.9,2.8" fill="none" stroke="#404040" stroke-width="1"/><rect x="1228" y="785" width="42" height="21" fill="#dedede"/><rect x="1242.5" y="789.5" width="14" height="12" fill="none" stroke="#404040" stroke-width="1.1"/><path d="M1245,789.5 v12 M1247.5,792.5 h6 v4 h-6z" fill="none" stroke="#404040" stroke-width="1"/><rect x="1283.5" y="789.5" width="5.5" height="4.5" fill="none" stroke="#404040" stroke-width="1"/><rect x="1292" y="789.5" width="5.5" height="4.5" fill="none" stroke="#404040" stroke-width="1"/><rect x="1283.5" y="797" width="5.5" height="4.5" fill="none" stroke="#404040" stroke-width="1"/><rect x="1292" y="797" width="5.5" height="4.5" fill="none" stroke="#404040" stroke-width="1"/><path d="M1325,790 h6 l1.5,1 l1.5,-1 h5.5 v12 h-5.5 l-1.5,1 l-1.5,-1 h-6 z M1332.5,791 v11 M1327,793 h3.5 M1327,796 h3.5 M1327,799 h3.5 M1335,793 h3 M1335,796 h3 M1335,799 h3" fill="none" stroke="#404040" stroke-width="1"/><path d="M1368,790 h13 M1369,790 v6 h11 v-6 M1374.5,796 v6 M1371.5,802 h6 M1372,793 h5" fill="none" stroke="#404040" stroke-width="1.1"/><path d="M1401.5,796 h6" stroke="#404040" stroke-width="1.1"/><path d="M1415.5,796.5 h104" stroke="#606060" stroke-width="1"/><rect x="1452" y="791" width="4.5" height="11" fill="#606060"/><path d="M1467.5,793 v7" stroke="#606060" stroke-width="1"/><path d="M1524.5,796 h7.5 M1528.25,792.2 v7.5" stroke="#404040" stroke-width="1.1"/><path d="M1582.5,793 l-2.5,2.5 l2.5,2.5 M1592.5,793 l2.5,2.5 l-2.5,2.5 M1585.5,790 l2,-2 l2,2 M1585.5,801 l2,2 l2,-2" fill="none" stroke="#303030" stroke-width="0.9"/><rect x="1584.3" y="792.3" width="6.4" height="6.4" fill="none" stroke="#303030" stroke-width="1.3"/></svg><div class="t" style="left:1179px;top:791.49px;font-size:11px;color:#404040;font-weight:normal;">Notes</div><div class="t" style="left:1547px;top:791.41px;font-size:10.5px;color:#404040;font-weight:normal;">78%</div><div class="a" style="left:208px;top:296.7px;width:325px;height:309px;border:1px solid #3f8f5a;border-radius:8px;background:linear-gradient(135deg,#e8e8e8 0%,#ebebea 50%,#ecebe4 100%);box-shadow:0 8px 26px rgba(0,0,0,0.26),0 0 6px rgba(0,0,0,0.08)"></div><div class="a" style="left:209.5px;top:379.8px;width:301px;height:192.4px;background:#fff;overflow:hidden"><div class="a" style="left:0;top:0;width:301px;height:19.4px;background:#f3f3f3"></div><div class="a" style="left:0;top:0;width:27.5px;height:193px;background:#f3f3f3"></div><div class="a" style="left:104.80000000000001px;top:0;width:67.5px;height:19.4px;background:#e0e0e0"></div><div class="a" style="left:0;top:19.399999999999977px;width:27.5px;height:20px;background:#e0e0e0"></div><div class="a" style="left:104.80000000000001px;top:19.399999999999977px;width:67.5px;height:20px;background:#fbe8e6"></div><div class="a" style="left:28.0px;top:39.39999999999998px;width:76.80000000000001px;height:80px;background:#efebf8"></div><div class="a" style="left:104.80000000000001px;top:39.39999999999998px;width:67.5px;height:80px;background:#e9eef9"></div></div><svg style="left:0;top:0" width="1600" height="808"><path d="M237.5,419.4 H510.3" stroke="#e1e1e1" stroke-width="1"/><path d="M222,419.4 H237.5" stroke="#e1e1e1" stroke-width="1"/><path d="M237.5,439.4 H510.3" stroke="#e1e1e1" stroke-width="1"/><path d="M222,439.4 H237.5" stroke="#e1e1e1" stroke-width="1"/><path d="M237.5,459.4 H510.3" stroke="#e1e1e1" stroke-width="1"/><path d="M222,459.4 H237.5" stroke="#e1e1e1" stroke-width="1"/><path d="M237.5,479.4 H510.3" stroke="#e1e1e1" stroke-width="1"/><path d="M222,479.4 H237.5" stroke="#e1e1e1" stroke-width="1"/><path d="M237.5,499.4 H510.3" stroke="#e1e1e1" stroke-width="1"/><path d="M222,499.4 H237.5" stroke="#e1e1e1" stroke-width="1"/><path d="M237.5,519.5 H510.3" stroke="#e1e1e1" stroke-width="1"/><path d="M222,519.5 H237.5" stroke="#e1e1e1" stroke-width="1"/><path d="M237.5,539.5 H510.3" stroke="#e1e1e1" stroke-width="1"/><path d="M222,539.5 H237.5" stroke="#e1e1e1" stroke-width="1"/><path d="M237.5,559.5 H510.3" stroke="#e1e1e1" stroke-width="1"/><path d="M222,559.5 H237.5" stroke="#e1e1e1" stroke-width="1"/><path d="M314.3,399.2 V572.2" stroke="#e1e1e1" stroke-width="1"/><path d="M314.3,381 V399" stroke="#d8d8d8" stroke-width="1"/><path d="M381.7,399.2 V572.2" stroke="#e1e1e1" stroke-width="1"/><path d="M381.7,381 V399" stroke="#d8d8d8" stroke-width="1"/><path d="M448.6,399.2 V572.2" stroke="#e1e1e1" stroke-width="1"/><path d="M448.6,381 V399" stroke="#d8d8d8" stroke-width="1"/><path d="M209.5,399.2 H510.3" stroke="#b9b9b9" stroke-width="1"/><path d="M237.5,399.2 V572.2" stroke="#c6c6c6" stroke-width="1"/><path d="M237.5,381 V399.2" stroke="#e2e2e2" stroke-width="1"/><path d="M221.5,395.8 L233.9,384 V395.8 Z" fill="#dcdcdc"/><rect x="209.5" y="379.8" width="301" height="1.2" fill="#dedede"/><path d="M314.8,399.2 h67 M314.8,419.2 h67" stroke="#217346" stroke-width="1.6"/><path d="M315,399.2 v20 M381.5,399.2 v20" stroke="#217346" stroke-width="1.6"/><path d="M237.5,399.2 v20" stroke="#217346" stroke-width="1.6"/><path d="M237.5,419.2 h77 M237.5,499.4 h77 M314.8,419.2 v80.2 M237.8,419.2 v80.2" stroke="#8e5fc7" stroke-width="1.6" fill="none"/><path d="M381.5,419.2 v80.2 M315.5,499.4 h66" stroke="#4472c4" stroke-width="1.6"/><rect x="312.5" y="417" width="4" height="4" fill="#8e5fc7"/><rect x="312.5" y="497.4" width="4" height="4" fill="#8e5fc7"/><rect x="379.5" y="497.4" width="4" height="4" fill="#4472c4"/><rect x="379.5" y="417.2" width="4" height="4" fill="#d13438"/><rect x="312.8" y="398.2" width="3.5" height="1.5" fill="#d13438"/><rect x="379.8" y="398.2" width="3.5" height="1.5" fill="#d13438"/><rect x="514" y="381" width="16" height="192" rx="8" fill="#f5f5f5"/><path d="M517,391.5 l4.5,-5 l4.5,5 z" fill="#777"/><rect x="517.5" y="397" width="8.5" height="60" rx="4.25" fill="#777"/><path d="M517,561.5 l4.5,5 l4.5,-5 z" fill="#777"/><rect x="209.6" y="579.7" width="302.8" height="17" rx="8.5" fill="#f3f3f3"/><path d="M222.3,584 l-7.3,4.5 l7.3,4.5 z" fill="#777"/><rect x="226.6" y="584" width="101.4" height="9" rx="4.5" fill="#777"/><path d="M500.7,584 l7.3,4.5 l-7.3,4.5 z" fill="#777"/><rect x="228.9" y="314" width="13.7" height="16.8" rx="0.8" fill="#185c37"/><rect x="228.9" y="314" width="13.7" height="13" rx="0.8" fill="#107c41"/><rect x="228.9" y="314" width="13.7" height="8.6" rx="0.8" fill="#21a366"/><rect x="228.9" y="314" width="13.7" height="4.4" rx="0.8" fill="#33c481"/><rect x="226" y="317.6" width="10.2" height="10.3" rx="0.8" fill="#107c41"/><path d="M228.6,319.8 L233.6,325.8 M233.6,319.8 L228.6,325.8" stroke="#fff" stroke-width="1.7"/><path d="M259,314 h15 l2,2 v14.8 h-17 z" fill="#c6c6c6"/><rect x="263.6" y="315.3" width="9.2" height="4.9" fill="#eaeaea"/><rect x="264" y="325.8" width="8.2" height="4.6" fill="#eaeaea"/><path d="M290,317 v5.5 h5.5 M290.5,322 c2,-4 6,-6 9.5,-4.5 c4,2 5,6.5 2,10 l-4,3.5" fill="none" stroke="#b0b0b0" stroke-width="1.3"/><path d="M312,320.5 l2.8,2.8 l2.8,-2.8" fill="none" stroke="#c0c0c0" stroke-width="0.9"/><path d="M344.5,317 v5.5 h-5.5 M344,322 c-2,-4 -6,-6 -9.5,-4.5 c-4,2 -5,6.5 -2,10 l4,3.5" fill="none" stroke="#b0b0b0" stroke-width="1.3"/><path d="M352,320.5 l2.8,2.8 l2.8,-2.8" fill="none" stroke="#c0c0c0" stroke-width="0.9"/><rect x="369.5" y="314.5" width="16" height="16" fill="none" stroke="#404040" stroke-width="1.2"/><path d="M369.5,317 h16 M369.5,321 h16 M369.5,325 h16 M374,317 v13 M379,317 v4" stroke="#404040" stroke-width="1"/><rect x="376.5" y="322" width="9.5" height="9" fill="#107c41"/><path d="M379,324 l4.5,5 M383.5,324 l-4.5,5" stroke="#fff" stroke-width="1.1"/><path d="M502,318 l10.3,10.3 M512.3,318 l-10.3,10.3" stroke="#262626" stroke-width="1.2"/></svg><div class="t" style="left:407.8px;top:316.80px;font-size:13px;color:#262626;font-weight:normal;letter-spacing:-0.5px">Cha...</div><div class="t" style="left:256.4px;width:40px;text-align:center;top:383.47px;font-size:13.5px;color:#404040;">A</div><div class="t" style="left:395.8px;width:40px;text-align:center;top:383.47px;font-size:13.5px;color:#404040;">C</div><div class="t" style="left:462.6px;width:40px;text-align:center;top:383.47px;font-size:13.5px;color:#404040;">D</div><div class="t" style="left:328.4px;width:40px;text-align:center;top:383.47px;font-size:13.5px;color:#217346;">B</div><div class="t" style="left:212.6px;width:20px;text-align:center;top:403.47px;font-size:13.5px;color:#217346;">1</div><div class="t" style="left:212.6px;width:20px;text-align:center;top:423.47px;font-size:13.5px;color:#404040;">2</div><div class="t" style="left:212.6px;width:20px;text-align:center;top:443.47px;font-size:13.5px;color:#404040;">3</div><div class="t" style="left:212.6px;width:20px;text-align:center;top:463.47px;font-size:13.5px;color:#404040;">4</div><div class="t" style="left:212.6px;width:20px;text-align:center;top:483.47px;font-size:13.5px;color:#404040;">5</div><div class="t" style="left:212.6px;width:20px;text-align:center;top:503.47px;font-size:13.5px;color:#404040;">6</div><div class="t" style="left:212.6px;width:20px;text-align:center;top:523.47px;font-size:13.5px;color:#404040;">7</div><div class="t" style="left:212.6px;width:20px;text-align:center;top:543.47px;font-size:13.5px;color:#404040;">8</div><div class="t" style="left:212.6px;width:20px;text-align:center;top:563.47px;font-size:13.5px;color:#404040;">9</div><div class="a" style="left:209.5px;top:572.2px;width:301px;height:5px;background:#eaeaea"></div><div class="t" style="left:317.5px;top:403.57px;font-size:13.5px;color:#111;font-weight:normal;letter-spacing:-0.2px">Sales</div><div class="t" style="left:240.3px;top:423.57px;font-size:13.5px;color:#111;font-weight:normal;letter-spacing:-0.35px">1st Qtr</div><div class="t" style="left:330px;width:49.5px;text-align:right;top:423.57px;font-size:13.5px;color:#111">8.2</div><div class="t" style="left:240.3px;top:443.57px;font-size:13.5px;color:#111;font-weight:normal;letter-spacing:-0.35px">2nd Qtr</div><div class="t" style="left:330px;width:49.5px;text-align:right;top:443.57px;font-size:13.5px;color:#111">3.2</div><div class="t" style="left:240.3px;top:463.57px;font-size:13.5px;color:#111;font-weight:normal;letter-spacing:-0.35px">3rd Qtr</div><div class="t" style="left:330px;width:49.5px;text-align:right;top:463.57px;font-size:13.5px;color:#111">1.4</div><div class="t" style="left:240.3px;top:483.57px;font-size:13.5px;color:#111;font-weight:normal;letter-spacing:-0.35px">4th Qtr</div><div class="t" style="left:330px;width:49.5px;text-align:right;top:483.57px;font-size:13.5px;color:#111">1.2</div></body></html>
